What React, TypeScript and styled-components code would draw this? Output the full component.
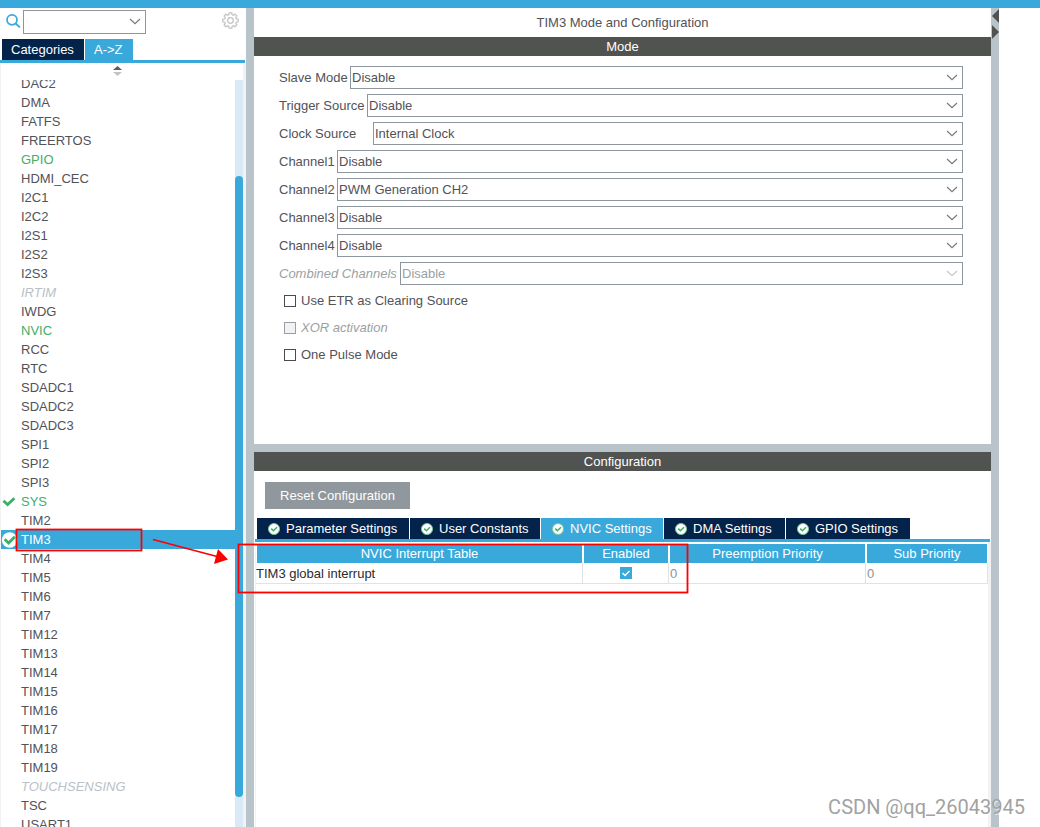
import React, { useLayoutEffect, useRef, useState } from "react";
import styled, { createGlobalStyle, css } from "styled-components";

const color = {
  blue: "#39a9dc",
  navy: "#03234b",
  slate: "#b8c4ca",
  dark: "#515351",
  text: "#525257",
  muted: "#9b9fa4",
  line: "#8d969e",
  pale: "#f0f2f4",
  green: "#3fae6b",
  red: "#ff0000",
};

const GlobalStyle = createGlobalStyle`
  *, *::before, *::after { box-sizing: border-box; }
  body { margin: 0; background: #fff; }
  body, button, input, select {
    font-family: "Liberation Sans", Arial, sans-serif;
    font-size: 13px;
    color: ${color.text};
  }
`;

const Shell = styled.div`
  position: relative;
  display: flex;
  flex-direction: column;
  height: 100vh;
  overflow: hidden;
`;

const TopBar = styled.div`
  flex: none;
  height: 8px;
  background: ${color.blue};
`;

const Workspace = styled.div`
  flex: 1;
  display: flex;
  min-height: 0;
`;

const Sidebar = styled.aside`
  flex: none;
  width: 246px;
  display: flex;
  flex-direction: column;
  min-height: 0;
`;

const SearchRow = styled.div`
  flex: none;
  display: flex;
  align-items: flex-start;
  height: 31px;
  padding: 2px 7px 0 6px;
`;

const SearchIcon = styled.svg`
  flex: none;
  width: 17px;
  height: 22px;
`;

const GearButton = styled.button`
  margin: 2px 0 0 auto;
  padding: 0;
  width: 17px;
  height: 17px;
  border: 0;
  background: none;
  svg { display: block; }
`;

const SelectBox = styled.div<{ $width?: number }>`
  position: relative;
  ${(p) => (p.$width ? css`flex: none; width: ${p.$width}px;` : css`flex: 1;`)}
  min-width: 0;
`;

const Select = styled.select<{ $height: number }>`
  display: block;
  appearance: none;
  width: 100%;
  height: ${(p) => p.$height}px;
  margin: 0;
  padding: 0 24px 0 1px;
  border: 1px solid ${color.line};
  border-radius: 0;
  background: #fff;
  &:disabled { color: ${color.muted}; opacity: 1; }
`;

const Chevron = styled.svg<{ $dim?: boolean }>`
  position: absolute;
  top: 50%;
  right: 5px;
  margin-top: -4px;
  width: 12px;
  height: 7px;
  fill: none;
  stroke: ${(p) => (p.$dim ? "#c6c9cc" : "#77797c")};
  stroke-width: 1.2;
  pointer-events: none;
`;

const TabStrip = styled.div`
  flex: none;
  display: flex;
  gap: 1px;
  padding-left: 2px;
  border-bottom: 3px solid ${color.blue};
`;

const Tab = styled.button<{ $active?: boolean; $pad: number; $width: number }>`
  display: flex;
  align-items: center;
  gap: 6px;
  width: ${(p) => p.$width}px;
  height: 21px;
  padding: 0 0 0 ${(p) => p.$pad}px;
  border: 0;
  background: ${(p) => (p.$active ? color.blue : color.navy)};
  color: #fff;
  white-space: nowrap;
`;

const SideTabs = styled.div`
  flex: none;
  margin-right: 1px;
`;

const ListPane = styled.div`
  flex: 1;
  display: flex;
  flex-direction: column;
  min-height: 0;
  border-left: 1px solid ${color.pale};
  border-right: 3px solid ${color.pale};
`;

const SortButton = styled.button`
  flex: none;
  display: flex;
  justify-content: center;
  height: 17px;
  padding: 2px 9px 0 0;
  border: 0;
  background: none;
`;

const ListBody = styled.div`
  flex: 1;
  display: flex;
  min-height: 0;
`;

const List = styled.ul`
  flex: 1;
  margin: 0;
  padding: 0;
  list-style: none;
  overflow-y: auto;
  scrollbar-width: none;
`;

type State = "normal" | "on" | "off" | "selected";

const Item = styled.li<{ $state: State }>`
  display: grid;
  grid-template-columns: 20px 1fr;
  align-items: center;
  height: 19px;
  line-height: 18px;
  color: ${(p) =>
    ({ normal: color.text, on: color.green, off: "#b8c1c8", selected: "#fff" })[p.$state]};
  font-style: ${(p) => (p.$state === "off" ? "italic" : "normal")};
  background: ${(p) => (p.$state === "selected" ? color.blue : "transparent")};
  svg { display: block; }
`;

const Track = styled.div`
  flex: none;
  width: 8px;
  display: grid;
  grid-template-rows: 96fr 621fr 30fr;
  background: #d9e9f5;
`;

const Thumb = styled.div`
  grid-row: 2;
  border-radius: 4px;
  background: ${color.blue};
`;

const Splitter = styled.div`
  flex: none;
  width: 8px;
  background: ${color.slate};
  svg { display: block; }
`;

const SplitterH = styled.div`
  flex: none;
  height: 8px;
  background: ${color.slate};
`;

const Main = styled.main`
  flex: 1;
  display: flex;
  flex-direction: column;
  min-width: 0;
`;

const RightMargin = styled.div`
  flex: none;
  width: 41px;
`;

const ModePanel = styled.section`
  flex: 436 1 0;
  min-height: 0;
  overflow: hidden;
`;

const ConfigPanel = styled.section`
  flex: 375 1 0;
  display: flex;
  flex-direction: column;
  min-height: 0;
`;

const Title = styled.h1`
  margin: 0;
  font-size: 13px;
  font-weight: 400;
  line-height: 29px;
  text-align: center;
`;

const Heading = styled.h2`
  flex: none;
  margin: 0;
  font-size: 13px;
  font-weight: 400;
  line-height: 19px;
  text-align: center;
  color: #fff;
  background: ${color.dark};
`;

const Form = styled.form`
  display: flex;
  flex-direction: column;
  gap: 5px;
  padding: 10px 28px 0 25px;
`;

const Field = styled.div`
  display: flex;
  align-items: center;
`;

const FieldLabel = styled.label<{ $dim?: boolean; $width: number }>`
  flex: none;
  width: ${(p) => p.$width}px;
  white-space: nowrap;
  color: ${(p) => (p.$dim ? color.muted : color.text)};
  font-style: ${(p) => (p.$dim ? "italic" : "normal")};
`;

const Checks = styled.div`
  display: flex;
  flex-direction: column;
  padding: 2px 0 0 30px;
`;

const CheckLabel = styled.label<{ $dim?: boolean }>`
  display: flex;
  align-items: center;
  gap: 5px;
  height: 27px;
  color: ${(p) => (p.$dim ? color.muted : color.text)};
  font-style: ${(p) => (p.$dim ? "italic" : "normal")};
`;

const Check = styled.input`
  appearance: none;
  width: 12px;
  height: 12px;
  margin: 0;
  border: 1px solid #4b4b4f;
  background: #fff;
  &:disabled { border-color: ${color.muted}; background: ${color.pale}; }
  &:checked { border-color: ${color.blue}; background: ${color.blue}; }
`;

const TickCell = styled.span`
  position: relative;
  display: block;
  width: 12px;
  height: 12px;
  margin: 0 auto;
  input { display: block; }
  svg { position: absolute; inset: 0; pointer-events: none; }
`;

const ResetButton = styled.button`
  flex: none;
  align-self: flex-start;
  width: 145px;
  height: 27px;
  margin: 11px 0 9px 11px;
  padding: 0;
  border: 0;
  background: #90989e;
  color: #fff;
`;

const ConfigTabs = styled.div`
  flex: none;
  margin: 0 1px;
`;

const TablePane = styled.div`
  flex: 1;
  min-height: 0;
  margin-left: 1px;
  padding-top: 2px;
  border-left: 1px solid ${color.pale};
  border-right: 3px solid ${color.pale};
`;

const Table = styled.table`
  width: 100%;
  table-layout: fixed;
  border-collapse: separate;
  border-spacing: 0;
  th, td { padding: 0 1px; font-weight: 400; text-align: left; }
  th {
    height: 19px;
    text-align: center;
    color: #fff;
    background: ${color.blue};
    border: solid #fff;
    border-width: 0 1px;
  }
  td {
    height: 21px;
    border: solid #e0e2e5;
    border-width: 0 1px 1px 0;
    color: #8d9297;
  }
  td:first-child { padding-left: 0; color: #2b2b2f; }
`;

const Annotations = styled.svg`
  position: absolute;
  top: 0;
  left: 0;
  width: 700px;
  height: 600px;
  pointer-events: none;
`;

const Watermark = styled.div`
  position: absolute;
  right: 15px;
  bottom: 5px;
  font-family: Roboto, "Liberation Sans", sans-serif;
  font-size: 20px;
  line-height: 30px;
  color: #a2a2a2;
  text-shadow: 1px 1px 0 rgba(255, 255, 255, 0.7);
  pointer-events: none;
`;

const ChevronIcon = ({ dim }: { dim?: boolean }) => (
  <Chevron $dim={dim} viewBox="0 0 12 7" aria-hidden="true">
    <path d="M1 1 L6 5.6 L11 1" />
  </Chevron>
);

const Tick = () => (
  <svg width="18" height="16" viewBox="0 0 18 16" aria-hidden="true">
    <path d="M2.4 6.8 L6.6 10.6 L13.4 4.2" fill="none" stroke={color.green} strokeWidth="2.8" />
  </svg>
);

const TickDisc = () => (
  <svg width="18" height="18" viewBox="0 0 18 18" aria-hidden="true">
    <circle cx="8.6" cy="9" r="7.8" fill="#fff" />
    <path d="M3.6 8.2 L7.6 12 L13.8 5.8" fill="none" stroke={color.green} strokeWidth="2.8" />
  </svg>
);

const TabTick = () => (
  <svg width="12" height="12" viewBox="0 0 12 12" aria-hidden="true">
    <circle cx="6" cy="6" r="5.5" fill="#fff" stroke="#7cc79a" strokeWidth="1" />
    <path d="M3.2 5.6 L5.4 7.8 L9 4.2" fill="none" stroke={color.green} strokeWidth="1.5" />
  </svg>
);

const GEAR = (() => {
  const points: string[] = [];
  const teeth = 8;
  for (let i = 0; i < teeth; i++) {
    const step = (Math.PI * 2) / teeth;
    [[-0.27, 6], [-0.17, 7.8], [0.17, 7.8], [0.27, 6]].forEach(([o, r]) => {
      const a = i * step + o;
      points.push(`${(8.5 + r * Math.cos(a)).toFixed(2)},${(8.5 + r * Math.sin(a)).toFixed(2)}`);
    });
  }
  return points.join(" ");
})();

const items: [string, State?][] = [
  ["DAC2"], ["DMA"], ["FATFS"], ["FREERTOS"], ["GPIO", "on"], ["HDMI_CEC"],
  ["I2C1"], ["I2C2"], ["I2S1"], ["I2S2"], ["I2S3"], ["IRTIM", "off"], ["IWDG"],
  ["NVIC", "on"], ["RCC"], ["RTC"], ["SDADC1"], ["SDADC2"], ["SDADC3"],
  ["SPI1"], ["SPI2"], ["SPI3"], ["SYS", "on"], ["TIM2"], ["TIM3", "selected"],
  ["TIM4"], ["TIM5"], ["TIM6"], ["TIM7"], ["TIM12"], ["TIM13"], ["TIM14"],
  ["TIM15"], ["TIM16"], ["TIM17"], ["TIM18"], ["TIM19"],
  ["TOUCHSENSING", "off"], ["TSC"], ["USART1"],
];

const fields = [
  { label: "Slave Mode", value: "Disable", width: 71 },
  { label: "Trigger Source", value: "Disable", width: 88 },
  { label: "Clock Source", value: "Internal Clock", width: 94 },
  { label: "Channel1", value: "Disable", width: 58 },
  { label: "Channel2", value: "PWM Generation CH2", width: 58 },
  { label: "Channel3", value: "Disable", width: 58 },
  { label: "Channel4", value: "Disable", width: 58 },
  { label: "Combined Channels", value: "Disable", width: 121, dim: true },
];

const tabs: [string, number][] = [
  ["Parameter Settings", 152],
  ["User Constants", 130],
  ["NVIC Settings", 122],
  ["DMA Settings", 121],
  ["GPIO Settings", 124],
];

export default function App() {
  const list = useRef<HTMLUListElement>(null);
  const [tab, setTab] = useState("NVIC Settings");

  useLayoutEffect(() => {
    if (list.current) list.current.scrollTop = 6;
  }, []);

  return (
    <Shell>
      <GlobalStyle />
      <TopBar />
      <Workspace>
        <Sidebar>
          <SearchRow>
            <SearchIcon viewBox="0 0 17 22" aria-hidden="true">
              <circle cx="6" cy="9.8" r="5" fill="none" stroke={color.blue} strokeWidth="1.8" />
              <path d="M9.6 13.4 L13.8 17.4" stroke={color.blue} strokeWidth="2" />
            </SearchIcon>
            <SelectBox $width={123}>
              <Select $height={24} aria-label="Search peripheral">
                <option></option>
              </Select>
              <ChevronIcon />
            </SelectBox>
            <GearButton type="button" aria-label="Settings">
              <svg width="17" height="17" viewBox="0 0 17 17" aria-hidden="true">
                <g fill="none" stroke="#c3c5c7" strokeWidth="1.3" strokeLinejoin="round">
                  <polygon points={GEAR} />
                  <circle cx="8.5" cy="8.5" r="2.8" />
                </g>
              </svg>
            </GearButton>
          </SearchRow>
          <SideTabs>
            <TabStrip>
              <Tab type="button" $pad={9} $width={82}>Categories</Tab>
              <Tab type="button" $pad={9} $width={48} $active>A-&gt;Z</Tab>
            </TabStrip>
          </SideTabs>
          <ListPane>
            <SortButton type="button" aria-label="Sort">
              <svg width="9" height="12" viewBox="0 0 9 12" aria-hidden="true">
                <path d="M4.5 1 L9 5 H0 Z" fill="#5e5e60" />
                <path d="M4.5 11 L9 7 H0 Z" fill="#c4c4c6" />
              </svg>
            </SortButton>
            <ListBody>
              <List ref={list}>
                {items.map(([name, state = "normal"]) => (
                  <Item key={name} $state={state}>
                    <span>{name === "SYS" ? <Tick /> : name === "TIM3" ? <TickDisc /> : null}</span>
                    {name}
                  </Item>
                ))}
              </List>
              <Track><Thumb /></Track>
            </ListBody>
          </ListPane>
        </Sidebar>
        <Splitter />
        <Main>
          <ModePanel>
            <Title>TIM3 Mode and Configuration</Title>
            <Heading>Mode</Heading>
            <Form>
              {fields.map((f) => (
                <Field key={f.label}>
                  <FieldLabel htmlFor={f.label} $dim={f.dim} $width={f.width}>{f.label}</FieldLabel>
                  <SelectBox>
                    <Select id={f.label} $height={23} disabled={f.dim}>
                      <option>{f.value}</option>
                    </Select>
                    <ChevronIcon dim={f.dim} />
                  </SelectBox>
                </Field>
              ))}
            </Form>
            <Checks>
              <CheckLabel><Check type="checkbox" />Use ETR as Clearing Source</CheckLabel>
              <CheckLabel $dim><Check type="checkbox" disabled />XOR activation</CheckLabel>
              <CheckLabel><Check type="checkbox" />One Pulse Mode</CheckLabel>
            </Checks>
          </ModePanel>
          <SplitterH />
          <ConfigPanel>
            <Heading>Configuration</Heading>
            <ResetButton type="button">Reset Configuration</ResetButton>
            <ConfigTabs>
              <TabStrip>
                {tabs.map(([name, width]) => (
                  <Tab
                    key={name}
                    type="button"
                    $pad={11}
                    $width={width}
                    $active={name === tab}
                    onClick={() => setTab(name)}
                  >
                    <TabTick />
                    {name}
                  </Tab>
                ))}
              </TabStrip>
            </ConfigTabs>
            <TablePane>
              <Table>
                <colgroup>
                  <col />
                  <col width="86" />
                  <col width="197" />
                  <col width="122" />
                </colgroup>
                <thead>
                  <tr>
                    <th>NVIC Interrupt Table</th>
                    <th>Enabled</th>
                    <th>Preemption Priority</th>
                    <th>Sub Priority</th>
                  </tr>
                </thead>
                <tbody>
                  <tr>
                    <td>TIM3 global interrupt</td>
                    <td>
                      <TickCell>
                        <Check type="checkbox" defaultChecked aria-label="Enable TIM3 global interrupt" />
                        <svg width="12" height="12" viewBox="0 0 12 12" aria-hidden="true">
                          <path d="M2.5 6 L5 8.5 L9.5 4" fill="none" stroke="#fff" strokeWidth="1.4" />
                        </svg>
                      </TickCell>
                    </td>
                    <td>0</td>
                    <td>0</td>
                  </tr>
                </tbody>
              </Table>
            </TablePane>
          </ConfigPanel>
        </Main>
        <Splitter>
          <svg width="8" height="32" viewBox="0 0 8 32" fill={color.dark} aria-hidden="true">
            <path d="M8 1 V15 L1 8 Z" />
            <path d="M1 17 V31 L8 24 Z" />
          </svg>
        </Splitter>
        <RightMargin />
      </Workspace>
      <Annotations viewBox="0 0 700 600" aria-hidden="true">
        <g fill="none" stroke={color.red} strokeWidth="1.8">
          <rect x="16.5" y="529.5" width="125" height="21" />
          <rect x="238.5" y="544.5" width="449" height="48" />
          <path d="M153 539.5 L217 556.5" />
        </g>
        <path d="M228 559.5 L214 564 L218 549 Z" fill={color.red} />
      </Annotations>
      <Watermark>CSDN @qq_26043945</Watermark>
    </Shell>
  );
}
